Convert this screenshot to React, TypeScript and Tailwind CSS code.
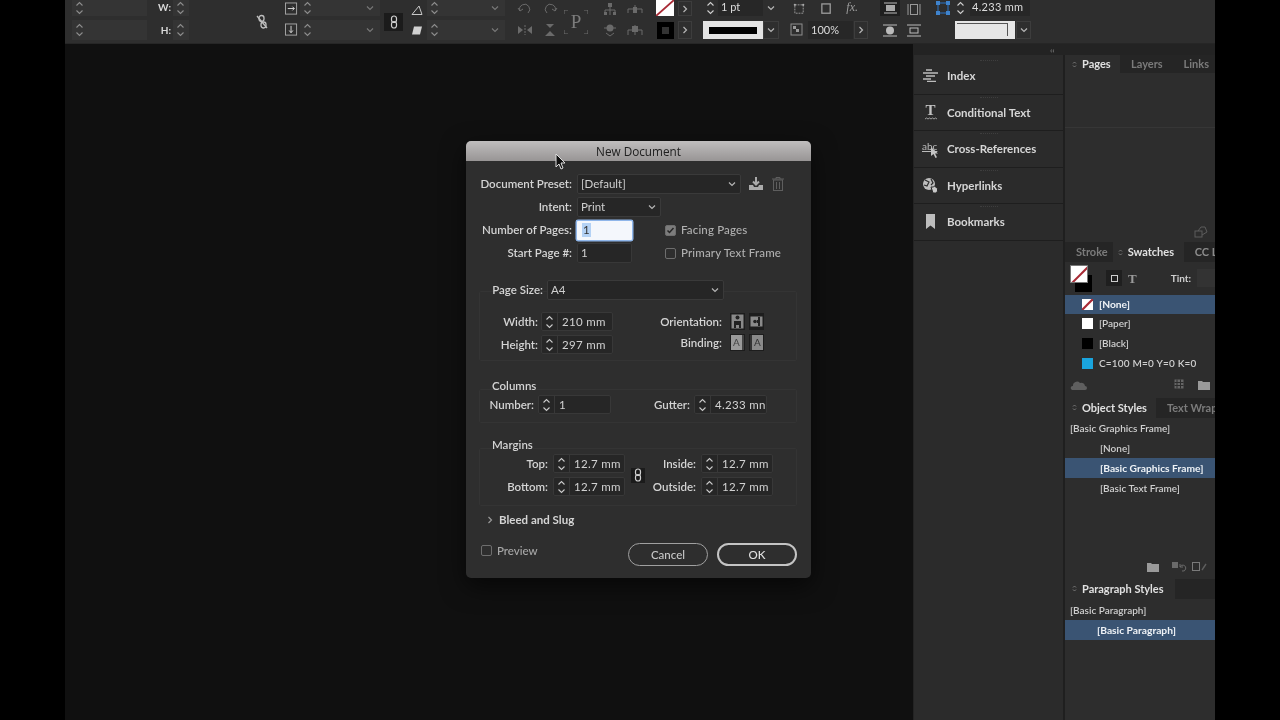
import React from "react";

const S = ({ w = 14, h = 14, vb = "0 0 14 14", className = "", children }: any) => (
  <svg width={w} height={h} viewBox={vb} fill="none" className={"shrink-0 " + className}>{children}</svg>
);

const Stepper = ({ c = "#8d8d8d", h = 18 }: { c?: string; h?: number }) => (
  <svg width="9" height={h} viewBox="0 0 9 18" fill="none" stroke={c} strokeWidth="1.1" className="shrink-0">
    <path d="M1.5 6.5 4.5 3.5 7.5 6.5M1.5 11.5 4.5 14.5 7.5 11.5" />
  </svg>
);

const Chev = ({ c = "#b5b5b5" }: { c?: string }) => (
  <svg width="8" height="6" viewBox="0 0 8 6" fill="none" stroke={c} strokeWidth="1.2" className="shrink-0">
    <path d="M1 1.5 4 4.5 7 1.5" />
  </svg>
);

const Right = ({ c = "#b5b5b5" }: { c?: string }) => (
  <svg width="6" height="8" viewBox="0 0 6 8" fill="none" stroke={c} strokeWidth="1.2" className="shrink-0">
    <path d="M1.5 1 4.5 4 1.5 7" />
  </svg>
);

const Chain = ({ c = "#cfcfcf" }: { c?: string }) => (
  <svg width="8" height="14" viewBox="0 0 8 14" fill="none" stroke={c} strokeWidth="1.2">
    <rect x="1.5" y="1" width="5" height="6.5" rx="2.5" />
    <rect x="1.5" y="6.5" width="5" height="6.5" rx="2.5" />
  </svg>
);

const ToolField = ({ w, h, chev = false, children }: any) => (
  <div className={"flex items-center bg-[#343434] " + w + " " + h}>
    <div className="ml-[3px]"><Stepper /></div>
    <div className="flex-1 text-[11px] pl-1 text-[#d6d6d6]">{children}</div>
    {chev && <div className="mr-[6px]"><Chev c="#777" /></div>}
  </div>
);

const ToolRow2 = ({ className = "", top, bottom }: any) => (
  <div className={"flex flex-col gap-[4px] shrink-0 " + className}>
    <div className="h-[16px] flex items-end justify-center overflow-hidden">{top}</div>
    <div className="h-[20px] flex items-center justify-center">{bottom}</div>
  </div>
);

const Dim = "#6a6a6a";

const Toolbar = () => (
  <div className="h-[44px] bg-[#2e2e2e] border-b border-[#262626] flex shrink-0 overflow-hidden">
    <ToolRow2 className="w-[82px] pl-[7px]" top={<ToolField w="w-full" h="h-[16px]" />} bottom={<ToolField w="w-full" h="h-[20px]" />} />
    <ToolRow2
      className="w-[100px] ml-[8px] items-start"
      top={<div className="flex items-center h-full w-full"><span className="w-[18px] text-right pr-[2px] text-[10px] font-bold text-[#d9d9d9] h-full leading-[14px]">W:</span><div className="flex-1"><ToolField w="w-full" h="h-[16px]" /></div></div>}
      bottom={<div className="flex items-center h-full w-full"><span className="w-[18px] text-right pr-[2px] text-[10px] font-bold text-[#d9d9d9]">H:</span><div className="flex-1"><ToolField w="w-full" h="h-[20px]" /></div></div>}
    />
    <div className="w-[14px] shrink-0 flex items-center justify-center">
      <S w={12} h={16} vb="0 0 12 16">
        <g stroke="#bdbdbd" strokeWidth="1.3"><rect x="3" y="1.5" width="5" height="6" rx="2.4" /><rect x="5" y="8" width="5" height="6" rx="2.4" /><path d="M1 2 11 14" /></g>
      </S>
    </div>
    <ToolRow2
      className="w-[18px] ml-[13px]"
      top={<S w={13} h={14}><rect x=".5" y=".5" width="12" height="12" stroke="#a8a8a8" /><path d="M3 6.5h7M8 4.5 10 6.5 8 8.5" stroke="#ddd" /></S>}
      bottom={<S w={13} h={14}><rect x=".5" y=".5" width="12" height="12" stroke="#a8a8a8" /><path d="M6.5 2.5v7M4.5 7.5 6.5 10 8.5 7.5" stroke="#ddd" /></S>}
    />
    <ToolRow2 className="w-[80px]" top={<ToolField w="w-full" h="h-[16px]" chev />} bottom={<ToolField w="w-full" h="h-[20px]" chev />} />
    <div className="w-[19px] ml-[4px] flex items-center shrink-0">
      <div className="w-[19px] h-[18px] bg-[#1b1b1b] flex items-center justify-center"><Chain /></div>
    </div>
    <ToolRow2
      className="w-[20px] ml-[4px]"
      top={<S w={12} h={12} vb="0 0 12 12"><path d="M1 10.5H11L8 2 1 10.5Z" stroke="#c8c8c8" /></S>}
      bottom={<S w={12} h={9} vb="0 0 12 9"><path d="M3 .5H11L9 8.5H1Z" fill="#d0d0d0" /></S>}
    />
    <ToolRow2 className="w-[78px]" top={<ToolField w="w-full" h="h-[16px]" chev />} bottom={<ToolField w="w-full" h="h-[20px]" chev />} />
    <ToolRow2
      className="w-[28px] ml-[6px]"
      top={<S w={16} h={14} vb="0 0 16 14"><path d="M3 9a5 5 0 1 1 8 2M1 6 3 9 6 7" stroke={Dim} /></S>}
      bottom={<S w={16} h={12} vb="0 0 16 12"><path d="M1 2 6 6 1 10ZM15 2 10 6 15 10Z" fill={Dim} /><path d="M8 1v10" stroke={Dim} strokeDasharray="2 1" /></S>}
    />
    <ToolRow2
      className="w-[22px]"
      top={<S w={16} h={14} vb="0 0 16 14"><path d="M13 9a5 5 0 1 0-8 2M15 6 13 9 10 7" stroke={Dim} /></S>}
      bottom={<S w={12} h={14} vb="0 0 12 14"><path d="M2 1h8L6 5ZM1 13l5-5 5 5Z" fill={Dim} /></S>}
    />
    <div className="w-[30px] shrink-0 flex items-center justify-center">
      <div className="relative w-[24px] h-[24px] flex items-center justify-center">
        <S w={24} h={24} vb="0 0 24 24" className="absolute left-0 top-0"><path d="M0 4V0h4M20 0h4v4M0 20v4h4M20 24h4v-4" stroke="#6e6e6e" /></S>
        <span className="text-[19px] text-[#7c7c7c] leading-none" style={{ fontFamily: '"Liberation Serif", serif' }}>P</span>
      </div>
    </div>
    <ToolRow2
      className="w-[34px] ml-[2px]"
      top={<S w={14} h={14}><path d="M7 1v4M2 13V8h10v5M7 5v8" stroke={Dim} /><rect x="5" y="1" width="4" height="4" fill={Dim} /><rect x="1" y="10" width="3" height="3" fill={Dim} /><rect x="10" y="10" width="3" height="3" fill={Dim} /></S>}
      bottom={<S w={14} h={14}><circle cx="7" cy="5" r="3.5" fill={Dim} /><path d="M1 5h12M3 10 7 13 11 10" stroke={Dim} /></S>}
    />
    <ToolRow2
      className="w-[16px]"
      top={<S w={16} h={12} vb="0 0 16 12"><path d="M1 9V5h14v4M8 1v8" stroke={Dim} /><rect x="6" y="3" width="4" height="6" fill={Dim} /></S>}
      bottom={<S w={16} h={12} vb="0 0 16 12"><path d="M1 11V6h14v5M8 1v10" stroke={Dim} /><rect x="5" y="2" width="6" height="6" fill={Dim} /></S>}
    />
    <ToolRow2
      className="w-[18px] ml-[13px]"
      top={<div className="w-[18px] h-[16px] bg-white overflow-hidden"><S w={18} h={16} vb="0 0 18 16"><path d="M0 16 18 0" stroke="#a82a35" strokeWidth="1.8" /></S></div>}
      bottom={<div className="w-[17px] h-[17px] bg-black flex items-center justify-center"><div className="w-[7px] h-[7px] bg-[#333]" /></div>}
    />
    <ToolRow2
      className="w-[14px] ml-[4px]"
      top={<div className="w-[14px] h-[15px] border border-[#3d3d3d] flex items-center justify-center"><Right /></div>}
      bottom={<div className="w-[14px] h-[18px] border border-[#3d3d3d] flex items-center justify-center"><Right /></div>}
    />
    <ToolRow2
      className="w-[76px] ml-[11px]"
      top={
        <div className="flex w-full h-full items-center">
          <div className="w-[15px] flex justify-center"><Stepper c="#d0d0d0" /></div>
          <div className="w-[45px] h-full bg-[#272727] text-[11px] pl-[3px] text-[#dcdcdc] leading-[14px]">1 pt</div>
          <div className="flex-1 flex justify-center"><Chev /></div>
        </div>
      }
      bottom={
        <div className="flex w-full items-center">
          <div className="w-[60px] h-[18px] bg-[#e3e3e3] flex items-center justify-center"><div className="w-[48px] h-[7px] bg-black" /></div>
          <div className="flex-1 h-[18px] border border-[#3d3d3d] flex items-center justify-center"><Chev /></div>
        </div>
      }
    />
    <div className="w-[88px] ml-[11px] shrink-0 flex flex-col gap-[4px]">
      <div className="h-[16px] flex items-end justify-between pr-[20px] pl-[3px]">
        <S w={13} h={13}><rect x="2" y="2" width="9" height="9" stroke="#9c9c9c" strokeDasharray="2 1" /><circle cx="2" cy="2" r="1.2" fill="#aaa" /><circle cx="11" cy="2" r="1.2" fill="#aaa" /></S>
        <S w={13} h={13}><rect x="2" y="1" width="9" height="10" stroke="#9c9c9c" strokeWidth="1.4" /></S>
        <span className="text-[12px] italic text-[#9c9c9c]" style={{ fontFamily: '"Liberation Serif", serif' }}>fx.</span>
      </div>
      <div className="h-[20px] flex items-center">
        <S w={14} h={14}><rect x="1" y="1" width="11" height="11" stroke="#8d8d8d" /><path d="M3 3h3v3H3zM6 6h3v3H6z" fill="#9a9a9a" /></S>
        <div className="ml-[4px] w-[45px] h-[18px] bg-[#272727] text-[11px] pl-[3px] text-[#dcdcdc] flex items-center">100%</div>
        <div className="w-[14px] h-[18px] ml-[1px] border border-[#3d3d3d] flex items-center justify-center"><Right /></div>
      </div>
    </div>
    <ToolRow2
      className="w-[24px]"
      top={<div className="w-[20px] h-[16px] bg-[#1f1f1f] flex items-center justify-center"><S w={13} h={12} vb="0 0 13 12"><path d="M0 1h13M0 11h13" stroke="#bbb" /><rect x="2" y="3" width="9" height="6" fill="#aaa" /></S></div>}
      bottom={<S w={14} h={13} vb="0 0 14 13"><path d="M0 1h14M0 12h14" stroke="#bbb" /><circle cx="7" cy="6.5" r="4" fill="#bbb" /></S>}
    />
    <ToolRow2
      className="w-[24px]"
      top={<S w={14} h={13} vb="0 0 14 13"><path d="M1 1v11M13 1v11" stroke="#999" /><rect x="3.5" y="1.5" width="7" height="10" stroke="#999" /></S>}
      bottom={<S w={14} h={13} vb="0 0 14 13"><path d="M0 1h14M0 12h14" stroke="#bbb" /><rect x="3" y="4" width="8" height="5" stroke="#bbb" /></S>}
    />
    <div className="w-[116px] ml-[10px] shrink-0 flex flex-col gap-[4px]">
      <div className="h-[16px] flex items-center">
        <S w={14} h={14}><rect x="2" y="2" width="10" height="10" stroke="#2d5d94" strokeWidth="1.5" /><rect x="0" y="0" width="4" height="4" fill="#3f83cc" /><rect x="10" y="0" width="4" height="4" fill="#3f83cc" /><rect x="0" y="10" width="4" height="4" fill="#3f83cc" /><rect x="10" y="10" width="4" height="4" fill="#3f83cc" /></S>
        <div className="ml-[6px] w-[9px] flex justify-center"><Stepper c="#d0d0d0" /></div>
        <div className="ml-[5px] w-[60px] h-full bg-[#272727] text-[11px] pl-[2px] text-[#dcdcdc] leading-[13px] tracking-[.3px]">4.233 mm</div>
      </div>
      <div className="h-[20px] flex items-center pl-[19px]">
        <div className="w-[60px] h-[18px] bg-[#e6e6e6] relative">
          <div className="absolute left-[2px] right-[7px] top-[2px] bottom-[3px] border-t border-r border-[#555]" />
        </div>
        <div className="w-[15px] h-[18px] border border-[#3d3d3d] flex items-center justify-center ml-[1px]"><Chev /></div>
      </div>
    </div>
  </div>
);

const DockBtn = ({ icon, label }: any) => (
  <div className="h-[36.5px] border-b border-[#1e1e1e] flex flex-col shrink-0">
    <div className="mx-auto mt-[2px] w-[18px] border-t border-dotted border-[#3e3e3e]" />
    <div className="flex items-center flex-1 mb-[3px]">
      <div className="w-[33px] flex justify-center">{icon}</div>
      <span className="text-[11.5px] font-bold text-[#d6d6d6]">{label}</span>
    </div>
  </div>
);

const Tab = ({ active, children, className = "" }: any) => (
  <div className={"h-full flex items-center text-[11px] font-bold whitespace-nowrap shrink-0 " + (active ? "bg-[#2d2d2d] text-[#e0e0e0] " : "text-[#7b7b7b] ") + className}>{children}</div>
);

const Grip = () => (
  <svg width="5" height="9" viewBox="0 0 5 9" fill="none" stroke="#808080" strokeWidth=".9" className="mr-[5px] shrink-0"><path d="M1 3.5 2.5 2 4 3.5M1 5.5 2.5 7 4 5.5" /></svg>
);

const Tabs = ({ children }: any) => <div className="h-[20px] bg-[#252525] flex shrink-0 overflow-hidden">{children}</div>;

const ListRow = ({ sel, h = "h-[19.6px]", pad = "pl-[5px]", children }: any) => (
  <div className={"flex items-center shrink-0 whitespace-nowrap " + h + " " + pad + (sel ? " bg-[#3a5473] text-[#eef2f6] font-bold text-[10.25px]" : " text-[#cfcfcf] font-semibold text-[10px]")}>{children}</div>
);

const SwatchN = () => (
  <div className="w-[11px] h-[11px] bg-white overflow-hidden"><S w={11} h={11} vb="0 0 11 11"><path d="M0 11 11 0" stroke="#a82a35" strokeWidth="2.2" /></S></div>
);

const Panels = () => (
  <div className="w-[302px] flex flex-col shrink-0 bg-[#232323]">
    <div className="h-[11px] flex items-center shrink-0 pl-[137px]">
      <span className="text-[8px] leading-none text-[#777] font-bold">‹‹</span>
    </div>
    <div className="flex flex-1 min-h-0 pl-[1px]">
      <div className="w-[149px] bg-[#2b2b2b] flex flex-col pt-[3px]">
        <DockBtn label="Index" icon={<S w={15} h={13} vb="0 0 15 13"><path d="M3 1h6M0 4h15M3 7h9M0 10h8M4 12.500h9" stroke="#bdbdbd" strokeWidth="1.5" /></S>} />
        <DockBtn label="Conditional Text" icon={<div className="flex flex-col items-center"><span className="text-[15px] font-bold leading-[13px] text-[#c2c2c2]" style={{ fontFamily: '"Liberation Serif", serif' }}>T</span><S w={12} h={3} vb="0 0 12 3"><path d="M0 2l1.500-1 1.500 1 1.500-1L6 2l1.500-1L9 2l1.500-1L12 2" stroke="#bbb" strokeWidth=".8" /></S></div>} />
        <DockBtn label="Cross-References" icon={<div className="relative w-[17px] h-[14px]"><span className="absolute left-0 top-[-2px] text-[10px] text-[#bbb] leading-[12px] underline">abc</span><S w={9} h={11} vb="0 0 9 11" className="absolute right-0 bottom-[-2px]"><path d="M1 0v9l2.500-2 2 4 1.500-.8-2-3.700H8Z" fill="#c4c4c4" /></S></div>} />
        <DockBtn label="Hyperlinks" icon={<S w={17} h={17} vb="0 0 17 17"><circle cx="7" cy="7" r="6" fill="#bdbdbd" /><path d="M3 3 7 5 5 9 2 8M9 2l2 4-2 2" stroke="#2b2b2b" strokeWidth="1.2" /><path d="M9 10h2.500l1-1 3 2.500v3l-2 1.500H11Z" fill="#c8c8c8" stroke="#2b2b2b" /></S>} />
        <DockBtn label="Bookmarks" icon={<S w={9} h={15} vb="0 0 9 15"><path d="M0 0h9v15L4.500 11.500 0 15Z" fill="#bdbdbd" /></S>} />
      </div>
      <div className="w-[2px] bg-[#1f1f1f]" />
      <div className="flex-1 bg-[#2d2d2d] flex flex-col min-w-0 overflow-hidden">
        <div className="h-[18px] bg-[#252525] flex shrink-0">
          <Tab active className="w-[55px] pl-[7px]"><Grip />Pages</Tab>
          <Tab className="ml-[11px]">Layers</Tab>
          <Tab className="ml-[21px]">Links</Tab>
        </div>
        <div className="h-[55px] border-b border-[#363636] shrink-0" />
        <div className="h-[114px] shrink-0 flex flex-col justify-end items-end pr-[7px] pb-[4px]">
          <S w={14} h={12} vb="0 0 14 12"><rect x="1" y="5" width="7" height="6" stroke="#5c5c5c" /><path d="M4 5 7 1h4l2 5-5 3" stroke="#5c5c5c" /></S>
        </div>
        <Tabs>
          <Tab className="ml-[11px]">Stroke</Tab>
          <Tab active className="ml-[5px] w-[71px] pl-[5px]"><Grip />Swatches</Tab>
          <Tab className="ml-[11px] text-[#8b8b8b] text-[10.5px]">CC L</Tab>
        </Tabs>
        <div className="h-[32.5px] flex items-center shrink-0 pl-[5px]">
          <div className="relative w-[26px] h-[27px]">
            <div className="absolute left-[5px] top-[10px] w-[17px] h-[17px] bg-black" />
            <div className="absolute left-0 top-0 w-[18px] h-[18px] bg-white border border-[#777] overflow-hidden"><S w={18} h={18} vb="0 0 18 18"><path d="M0 18 18 0" stroke="#a82a35" strokeWidth="2" /></S></div>
          </div>
          <div className="ml-[10px] w-[16px] h-[16px] bg-[#1f1f1f] flex items-center justify-center"><div className="w-[7px] h-[7px] border border-[#ccc]" /></div>
          <span className="ml-[6px] text-[13px] font-bold text-[#9a9a9a]" style={{ fontFamily: '"Liberation Serif", serif' }}>T</span>
          <span className="ml-[34px] text-[10px] font-bold text-[#cfcfcf]">Tint:</span>
          <div className="ml-[6px] flex-1 h-[18px] bg-[#333]" />
        </div>
        <ListRow sel pad="pl-[17px]"><SwatchN /><span className="ml-[6px]">[None]</span></ListRow>
        <ListRow pad="pl-[17px]"><div className="w-[11px] h-[11px] bg-white" /><span className="ml-[6px]">[Paper]</span></ListRow>
        <ListRow pad="pl-[17px]"><div className="w-[11px] h-[11px] bg-black" /><span className="ml-[6px]">[Black]</span></ListRow>
        <ListRow pad="pl-[17px]"><div className="w-[11px] h-[11px] bg-[#1aa4dd]" /><span className="ml-[6px] tracking-[.2px]">C=100 M=0 Y=0 K=0</span></ListRow>
        <div className="h-[25px] flex items-center shrink-0 pl-[5px]">
          <S w={17} h={11} vb="0 0 17 11"><path d="M1 9a2 2 0 0 1 2-3 4 4 0 0 1 7-3 3.500 3.500 0 0 1 5 3 2 2 0 0 1 0 4H2Z" fill="#5f5f5f" /></S>
          <div className="ml-[87px]"><S w={12} h={12} vb="0 0 12 12"><rect x=".5" y=".5" width="9" height="9" fill="#666" /><path d="M3 .5v9M6.500 .5v9M.5 3.500h9M.5 6.500h9" stroke="#2d2d2d" /></S></div>
          <div className="ml-[12px]"><S w={12} h={10} vb="0 0 12 10"><path d="M0 1h4l1 1h7v8H0Z" fill="#9a9a9a" /></S></div>
        </div>
        <Tabs>
          <Tab active className="w-[91px] pl-[7px]"><Grip />Object Styles</Tab>
          <Tab className="ml-[11px]">Text Wrap</Tab>
        </Tabs>
        <div className="h-[.5px] shrink-0" />
        <ListRow h="h-[20px]">[Basic Graphics Frame]</ListRow>
        <ListRow h="h-[20px]" pad="pl-[35px]">[None]</ListRow>
        <ListRow h="h-[20px]" sel pad="pl-[35px]">[Basic Graphics Frame]</ListRow>
        <ListRow h="h-[20px]" pad="pl-[35px]">[Basic Text Frame]</ListRow>
        <div className="h-[57.5px] shrink-0" />
        <div className="h-[23px] flex items-center justify-end shrink-0 pr-[8px] pb-[1px]">
          <S w={12} h={10} vb="0 0 12 10"><path d="M0 1h4l1 1h7v8H0Z" fill="#9a9a9a" /></S>
          <S w={15} h={10} vb="0 0 15 10" className="ml-[13px]"><rect x="0" y="0" width="6" height="6" fill="#6a6a6a" /><path d="M8 5a3 3 0 1 1 2 4M8 2v3h3" stroke="#6a6a6a" /></S>
          <S w={15} h={10} vb="0 0 15 10" className="ml-[5px]"><rect x=".5" y=".5" width="7" height="8" stroke="#7a7a7a" /><path d="M10 8l4-6" stroke="#5e5e5e" strokeWidth="1.4" /></S>
        </div>
        <Tabs>
          <Tab active className="w-[110px] pl-[7px]"><Grip />Paragraph Styles</Tab>
        </Tabs>
        <div className="h-[1.5px] shrink-0" />
        <ListRow h="h-[20px]">[Basic Paragraph]</ListRow>
        <ListRow h="h-[20px]" sel pad="pl-[32px]">[Basic Paragraph]</ListRow>
      </div>
    </div>
  </div>
);

const Lbl = ({ w, className = "", children }: any) => (
  <div className={"text-right text-[11.5px] font-semibold text-[#d4d4d4] whitespace-nowrap shrink-0 " + w + " " + className}>{children}</div>
);

const Sel = ({ w, children }: any) => (
  <div className={"h-[20px] bg-[#262626] border border-[#3a3a3a] rounded-[2px] flex items-center justify-between pl-[3px] pr-[4px] text-[11.5px] text-[#cfcfcf] " + w}>
    <span>{children}</span><Chev />
  </div>
);

const Spin = ({ sw = "w-[16px]", vw = "w-[39px]", children }: any) => (
  <div className="h-[19px] flex bg-[#262626] border border-[#383838] rounded-[2px] text-[11.5px] text-[#d2d2d2] shrink-0">
    <div className={"flex items-center justify-center border-r border-[#383838] " + sw}><Stepper c="#c8c8c8" /></div>
    <div className={"flex items-center pl-[4px] whitespace-nowrap overflow-hidden tracking-[.3px] " + vw}>{children}</div>
  </div>
);

const Check = ({ on }: { on?: boolean }) => (
  <div className={"w-[11px] h-[11px] rounded-[2px] border border-[#6e6e6e] shrink-0 flex items-center justify-center " + (on ? "bg-[#7c7c7c]" : "")}>
    {on && <svg width="9" height="9" viewBox="0 0 9 9" fill="none" stroke="#262626" strokeWidth="1.5"><path d="M1.500 4.500 3.500 6.500 7.500 2" /></svg>}
  </div>
);

const IconBtn = ({ children }: any) => (
  <div className="w-[15px] h-[17px] flex items-center justify-center bg-[#1d1d1d]">{children}</div>
);

const Group = ({ className, children }: any) => (
  <div className={"border border-[#343434] rounded-[2px] ml-[13px] w-[318px] shrink-0 " + className}>{children}</div>
);

const Dialog = () => (
  <div className="absolute left-[466px] top-[141px] w-[345px] h-[437px] rounded-[5px] overflow-hidden bg-[#2e2e2e] shadow-[0_8px_24px_rgba(0,0,0,.6)] flex flex-col">
    <div className="h-[20px] shrink-0 pt-[1px] bg-gradient-to-b from-[#c0bebe] to-[#989595] flex items-center justify-center text-[11.75px] text-[#202020]" style={{ fontFamily: '"Open Sans", sans-serif' }}>New Document</div>
    <div className="flex items-center h-[20px] mt-[13px] shrink-0">
      <Lbl w="w-[106px]">Document Preset:</Lbl>
      <div className="ml-[5px]"><Sel w="w-[164px]">[Default]</Sel></div>
      <div className="ml-[7px]">
        <S w={16} h={14} vb="0 0 16 14"><path d="M8 0v7M5 4.500 8 7.500 11 4.500" stroke="#aaa" strokeWidth="2" /><path d="M1 8h4l1 2h4l1-2h4v5H1Z" fill="#aaa" /></S>
      </div>
      <div className="ml-[8px]">
        <S w={12} h={14} vb="0 0 12 14"><path d="M0 2h12M4 2V.5h4V2" stroke="#5e5e5e" /><rect x="1.500" y="3" width="9" height="10.500" stroke="#5e5e5e" /><path d="M4.500 5v7M7.500 5v7" stroke="#5e5e5e" /></S>
      </div>
    </div>
    <div className="flex items-center h-[20px] mt-[3px] shrink-0">
      <Lbl w="w-[106px]">Intent:</Lbl>
      <div className="ml-[5px]"><Sel w="w-[84px]">Print</Sel></div>
    </div>
    <div className="flex items-center h-[20px] mt-[3px] shrink-0">
      <Lbl w="w-[106px]">Number of Pages:</Lbl>
      <div className="ml-[5px] w-[55px] h-[19px] bg-[#f4f7fc] rounded-[1px] ring-[1.5px] ring-[#8fb6ea] flex items-center pl-[5px] text-[11.5px] text-[#333]"><span className="bg-[#b4d2f5] px-[1px] leading-[14px]">1</span></div>
      <div className="ml-[33px]"><Check on /></div>
      <span className="ml-[5px] text-[11.5px] text-[#b0b0b0] font-medium tracking-[.15px]">Facing Pages</span>
    </div>
    <div className="flex items-center h-[20px] mt-[3px] shrink-0">
      <Lbl w="w-[106px]">Start Page #:</Lbl>
      <div className="ml-[5px] w-[55px] h-[20px] bg-[#262626] border border-[#383838] rounded-[2px] flex items-center pl-[3px] text-[11.5px] text-[#d2d2d2]">1</div>
      <div className="ml-[33px]"><Check /></div>
      <span className="ml-[5px] text-[11.5px] text-[#b0b0b0] font-medium tracking-[.15px]">Primary Text Frame</span>
    </div>

    <div className="flex items-center h-[20px] mt-[17px] shrink-0 relative z-10">
      <Lbl w="w-[77px]">Page Size:</Lbl>
      <div className="ml-[4px]"><Sel w="w-[177px]">A4</Sel></div>
    </div>
    <Group className="h-[70px] mt-[-9px] pt-[20px] relative">
      <div className="flex items-center h-[19px]">
        <Lbl w="w-[58px]">Width:</Lbl>
        <div className="ml-[3px]"><Spin vw="w-[54px]">210 mm</Spin></div>
        <Lbl w="w-[109px]">Orientation:</Lbl>
        <div className="ml-[8px] flex gap-[4px]">
          <IconBtn><S w={13} h={15} vb="0 0 13 15"><rect x=".5" y=".5" width="12" height="14" fill="#8a8a8a" /><circle cx="6.500" cy="3.500" r="2" fill="#222" /><path d="M3 7h7v7H8v-3H5v3H3Z" fill="#222" /></S></IconBtn>
          <IconBtn><S w={13} h={13} vb="0 0 13 13"><rect x=".5" y="1.500" width="12" height="10" fill="#8a8a8a" /><circle cx="5" cy="6.500" r="1.800" fill="#222" /><path d="M8 2v3H7v3h1v3h2V2Z" fill="#222" /></S></IconBtn>
        </div>
      </div>
      <div className="flex items-center h-[19px] mt-[4px]">
        <Lbl w="w-[58px]">Height:</Lbl>
        <div className="ml-[3px]"><Spin vw="w-[54px]">297 mm</Spin></div>
        <Lbl w="w-[109px]" className="mt-[-4px]">Binding:</Lbl>
        <div className="ml-[8px] flex gap-[4px] mt-[-4px]">
          <IconBtn><div className="w-[13px] h-[15px] bg-[#9a9a9a] border-r-2 border-[#444] flex items-center justify-center text-[10px] text-[#444]">A</div></IconBtn>
          <IconBtn><div className="w-[13px] h-[15px] bg-[#8a8a8a] border-l-2 border-[#333] flex items-center justify-center text-[10px] text-[#333]">A</div></IconBtn>
        </div>
      </div>
    </Group>

    <div className="mt-[18px] h-[14px] flex items-center pl-[26px] text-[11.5px] font-semibold text-[#d4d4d4] shrink-0 relative z-10">Columns</div>
    <Group className="h-[34px] mt-[-4px] pb-[3px] flex items-center">
      <Lbl w="w-[54px]">Number:</Lbl>
      <div className="ml-[4px]"><Spin vw="w-[55px]">1</Spin></div>
      <Lbl w="w-[79px]">Gutter:</Lbl>
      <div className="ml-[4px]"><Spin vw="w-[55px]">4.233 mn</Spin></div>
    </Group>

    <div className="mt-[15px] h-[14px] flex items-center pl-[26px] text-[11.5px] font-semibold text-[#d4d4d4] shrink-0 relative z-10">Margins</div>
    <Group className="h-[58px] mt-[-4px] pb-[4px] flex items-center">
      <div className="flex flex-col gap-[4px]">
        <div className="flex items-center"><Lbl w="w-[68px]">Top:</Lbl><div className="ml-[5px]"><Spin vw="w-[54px]">12.7 mm</Spin></div></div>
        <div className="flex items-center"><Lbl w="w-[68px]">Bottom:</Lbl><div className="ml-[5px]"><Spin vw="w-[54px]">12.7 mm</Spin></div></div>
      </div>
      <div className="ml-[6px] w-[14px] h-[15px] bg-[#1b1b1b] flex items-center justify-center"><Chain /></div>
      <div className="flex flex-col gap-[4px]">
        <div className="flex items-center"><Lbl w="w-[51px]">Inside:</Lbl><div className="ml-[5px]"><Spin vw="w-[54px]">12.7 mm</Spin></div></div>
        <div className="flex items-center"><Lbl w="w-[51px]">Outside:</Lbl><div className="ml-[5px]"><Spin vw="w-[54px]">12.7 mm</Spin></div></div>
      </div>
    </Group>

    <div className="mt-[6px] h-[16px] flex items-center pl-[21px] shrink-0">
      <Right c="#999" />
      <span className="ml-[6px] text-[11.5px] font-bold text-[#d4d4d4]">Bleed and Slug</span>
    </div>
    <div className="mt-[15px] flex items-start pl-[15px] pr-[14px] shrink-0">
      <div className="flex items-center h-[13px] mt-[1px]">
        <Check />
        <span className="ml-[5px] text-[11.5px] font-medium text-[#a8a8a8]">Preview</span>
      </div>
      <div className="ml-auto flex gap-[9px]">
        <div className="w-[80px] h-[23px] rounded-full border border-[#a0a0a0] flex items-center justify-center text-[11.5px] font-medium text-[#c8c8c8]">Cancel</div>
        <div className="w-[80px] h-[23px] rounded-full border-2 border-[#c4c4c4] flex items-center justify-center text-[11.5px] font-medium text-[#e0e0e0]">OK</div>
      </div>
    </div>
  </div>
);

export default function App() {
  return (
    <div className="relative w-[1280px] h-[720px] overflow-hidden bg-black px-[65px] blur-[0.35px]" style={{ fontFamily: "Lato, sans-serif" }}>
      <div className="h-full flex flex-col">
        <Toolbar />
        <div className="flex flex-1 min-h-0">
          <div className="flex-1 bg-[#101010]" />
          <Panels />
        </div>
      </div>
      <Dialog />
      <svg width="11" height="17" viewBox="0 0 11 17" className="absolute left-[555px] top-[153px]">
        <path d="M1 1v13l3-3 2 5 2-1-2-5h4Z" fill="#111" stroke="#ddd" strokeWidth="1" />
      </svg>
    </div>
  );
}
